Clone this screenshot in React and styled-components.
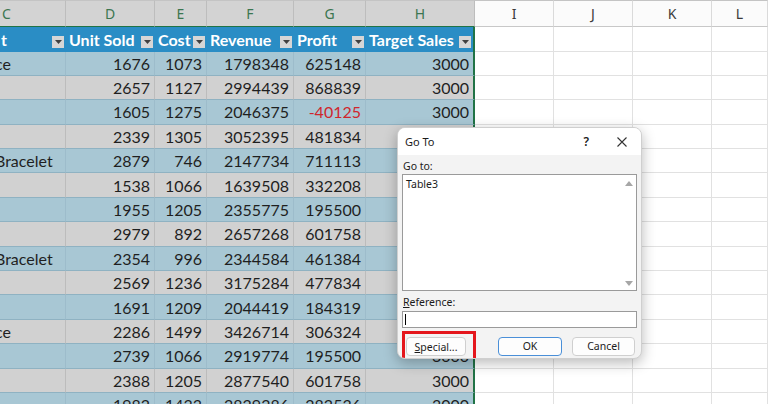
import React from 'react';
import styled, { createGlobalStyle } from 'styled-components';

const GlobalStyle = createGlobalStyle`
    body {
        margin: 0;
        background: #fff;
        overflow: hidden;
    }
`

const cols = '66px 89px 52px 87px 72px 109px 79px 79px 79px 56px';
const letters = ['C', 'D', 'E', 'F', 'G', 'H', 'I', 'J', 'K', 'L'];
const headers = ['t', 'Unit Sold', 'Cost', 'Revenue', 'Profit', 'Target Sales'];

const rows = [
    ['ce', 1676, 1073, 1798348, 625148, 3000],
    ['', 2657, 1127, 2994439, 868839, 3000],
    ['', 1605, 1275, 2046375, -40125, 3000],
    ['', 2339, 1305, 3052395, 481834, 3000],
    ['Bracelet', 2879, 746, 2147734, 711113, 3000],
    ['', 1538, 1066, 1639508, 332208, 3000],
    ['', 1955, 1205, 2355775, 195500, 3000],
    ['', 2979, 892, 2657268, 601758, 3000],
    ['Bracelet', 2354, 996, 2344584, 461384, 3000],
    ['', 2569, 1236, 3175284, 477834, 3000],
    ['', 1691, 1209, 2044419, 184319, 3000],
    ['ce', 2286, 1499, 3426714, 306324, 3000],
    ['', 2739, 1066, 2919774, 195500, 3000],
    ['', 2388, 1205, 2877540, 601758, 3000],
    ['', 1982, 1433, 2829286, 282536, 3000],
];

const App = () => {
    return (
        <Sheet>
            <GlobalStyle />
            <Row $h={27}>
                {letters.map((l, i) => (
                    <ColHead key={l} $sel={i < 6} $left={i === 0}>{l}</ColHead>
                ))}
            </Row>
            <Row $h={24.5}>
                {headers.map((h, i) => (
                    <HeadCell key={h} $edge={i === 5}>
                        <HeadLabel $indent={i === 0 ? -2 : 0}>{h}</HeadLabel>
                        <FilterBtn>
                            <svg width="7" height="4" viewBox="0 0 7 4">
                                <path d="M0 0 L7 0 L3.5 4 Z" fill="#404040" />
                            </svg>
                        </FilterBtn>
                    </HeadCell>
                ))}
                {[0, 1, 2, 3].map((k) => <Blank key={k} />)}
            </Row>
            {rows.map((r, ri) => {
                const tone = ri % 2 === 0 ? 'blue' : 'gray';
                return (
                    <Row key={ri} $h={24.4}>
                        <TextCell $tone={tone} $indent={r[0] === 'ce' ? -5 : -5}>{r[0]}</TextCell>
                        {r.slice(1).map((v, ci) => (
                            <NumCell key={ci} $tone={tone} $red={v < 0} $edge={ci === 4}>{v}</NumCell>
                        ))}
                        {[0, 1, 2, 3].map((k) => <Blank key={k} />)}
                    </Row>
                );
            })}

            <Dialog>
                <TitleBar>
                    <Title>Go To</Title>
                    <HelpMark>?</HelpMark>
                    <CloseBtn>
                        <svg width="10" height="10" viewBox="0 0 10 10">
                            <path d="M0.5 0.5 L9.5 9.5 M9.5 0.5 L0.5 9.5" stroke="#333" strokeWidth="1.1" />
                        </svg>
                    </CloseBtn>
                </TitleBar>
                <Body>
                    <Label>Go to:</Label>
                    <ListBox>
                        <ListItem>Table3</ListItem>
                        <ScrollBar>
                            <svg width="8" height="5" viewBox="0 0 8 5"><path d="M0 5 L4 0 L8 5 Z" fill="#a6a6a6" /></svg>
                            <svg width="8" height="5" viewBox="0 0 8 5"><path d="M0 0 L4 5 L8 0 Z" fill="#a6a6a6" /></svg>
                        </ScrollBar>
                    </ListBox>
                    <Label><Accel>R</Accel>eference:</Label>
                    <RefInput><Caret /></RefInput>
                    <ButtonRow>
                        <Highlight>
                            <DlgButton $w={60}><Accel>S</Accel>pecial...</DlgButton>
                        </Highlight>
                        <ButtonGroup>
                            <DlgButton $w={64} $primary>OK</DlgButton>
                            <DlgButton $w={63}>Cancel</DlgButton>
                        </ButtonGroup>
                    </ButtonRow>
                </Body>
            </Dialog>
        </Sheet>
    )
}

const Sheet = styled.div`
    position: relative;
    width: 768px;
    height: 404px;
    overflow: hidden;
    background: #fff;
    font-family: Lato, "Liberation Sans", sans-serif;
`

const Row = styled.div`
    display: grid;
    grid-template-columns: ${cols};
    height: ${(p) => p.$h}px;
`

const ColHead = styled.div`
    box-sizing: border-box;
    display: flex;
    align-items: center;
    justify-content: ${(p) => (p.$left ? 'flex-start' : 'center')};
    padding-left: ${(p) => (p.$left ? '2px' : '0')};
    background: ${(p) => (p.$sel ? '#d3d3d3' : '#fbfbfb')};
    color: ${(p) => (p.$sel ? '#3b7650' : '#3a3a3a')};
    border-top: 1px solid #c4c4c4;
    border-right: 1px solid ${(p) => (p.$sel ? '#bdbdbd' : '#dadada')};
    border-bottom: 1px solid ${(p) => (p.$sel ? '#217346' : '#c8c8c8')};
    font-family: "Noto Sans", "Open Sans", sans-serif;
    font-size: 14px;
`

const HeadCell = styled.div`
    box-sizing: border-box;
    display: flex;
    align-items: center;
    justify-content: space-between;
    overflow: hidden;
    padding: 0 2px 0 3px;
    background: #2a8dc5;
    color: #fff;
    font-weight: 700;
    font-size: 16px;
    border-right: ${(p) => (p.$edge ? '2px solid #217346' : 'none')};
`

const HeadLabel = styled.span`
    white-space: nowrap;
    margin-left: ${(p) => p.$indent}px;
`

const FilterBtn = styled.span`
    flex: none;
    display: flex;
    align-items: center;
    justify-content: center;
    width: 12px;
    height: 12px;
    margin-top: 5px;
    background: #d6d6d6;
`

const tones = {
    blue: { bg: '#a8c7d4', line: '#9dbccb' },
    gray: { bg: '#d1d1d1', line: '#bcbcbc' },
};

const Cell = styled.div`
    box-sizing: border-box;
    display: flex;
    align-items: center;
    overflow: hidden;
    white-space: nowrap;
    background: ${(p) => tones[p.$tone].bg};
    border-bottom: 1px solid #8fb2c2;
    border-right: 1px solid ${(p) => tones[p.$tone].line};
    color: #1f1f1f;
    font-size: 16px;
`

const TextCell = styled(Cell)`
    justify-content: flex-start;
    text-indent: ${(p) => p.$indent}px;
`

const NumCell = styled(Cell)`
    justify-content: flex-end;
    padding-right: 4px;
    color: ${(p) => (p.$red ? '#d0262d' : '#1f1f1f')};
    ${(p) => p.$edge && 'border-right: 2px solid #217346;'}
`

const Blank = styled.div`
    box-sizing: border-box;
    border-right: 1px solid #e1e1e1;
    border-bottom: 1px solid #e1e1e1;
    background: #fff;
`

const Dialog = styled.div`
    position: absolute;
    left: 397px;
    top: 127px;
    width: 245px;
    height: 232px;
    box-sizing: border-box;
    border: 1px solid #cfcfcf;
    border-radius: 8px;
    background: #f3f3f3;
    box-shadow: 0 4px 14px rgba(0, 0, 0, 0.28);
    overflow: hidden;
    font-family: "Noto Sans", "Open Sans", sans-serif;
    font-size: 10.5px;
    color: #1b1b1b;
`

const TitleBar = styled.div`
    display: flex;
    align-items: center;
    height: 27px;
    padding: 0 14px 0 7px;
    background: #fff;
`

const Title = styled.span`
    flex: 1;
    font-size: 11px;
`

const HelpMark = styled.span`
    font-size: 12px;
    font-weight: 600;
    margin-right: 28px;
`

const CloseBtn = styled.span`
    display: flex;
`

const Body = styled.div`
    padding: 0 4px;
`

const Label = styled.div`
    height: 16px;
    line-height: 16px;
    margin-top: 3px;
    padding-left: 1px;
`

const Accel = styled.span`
    text-decoration: underline;
`

const ListBox = styled.div`
    display: flex;
    height: 117px;
    box-sizing: border-box;
    border: 1px solid #9a9a9a;
    background: #fff;
`

const ListItem = styled.div`
    flex: 1;
    padding: 2px 3px;
`

const ScrollBar = styled.div`
    width: 14px;
    display: flex;
    flex-direction: column;
    justify-content: space-between;
    align-items: center;
    padding: 6px 0 4px;
`

const RefInput = styled.div`
    display: flex;
    align-items: center;
    height: 17px;
    box-sizing: border-box;
    margin-top: 1px;
    padding-left: 2px;
    border: 1px solid #9a9a9a;
    background: #fff;
`

const Caret = styled.span`
    width: 1px;
    height: 11px;
    background: #000;
`

const ButtonRow = styled.div`
    display: flex;
    align-items: center;
    justify-content: space-between;
    margin-top: 3px;
    padding-right: 2px;
`

const Highlight = styled.div`
    border: 3px solid #e4161c;
    padding: 3px 7px 2px 1px;
`

const ButtonGroup = styled.div`
    display: flex;
    gap: 10px;
`

const DlgButton = styled.div`
    box-sizing: border-box;
    display: flex;
    align-items: center;
    justify-content: center;
    width: ${(p) => p.$w}px;
    height: 19px;
    border: 1px solid ${(p) => (p.$primary ? '#4a8fd8' : '#cfcfcf')};
    border-radius: 4px;
    background: #fdfdfd;
    font-size: 10.5px;
`

export default App;
